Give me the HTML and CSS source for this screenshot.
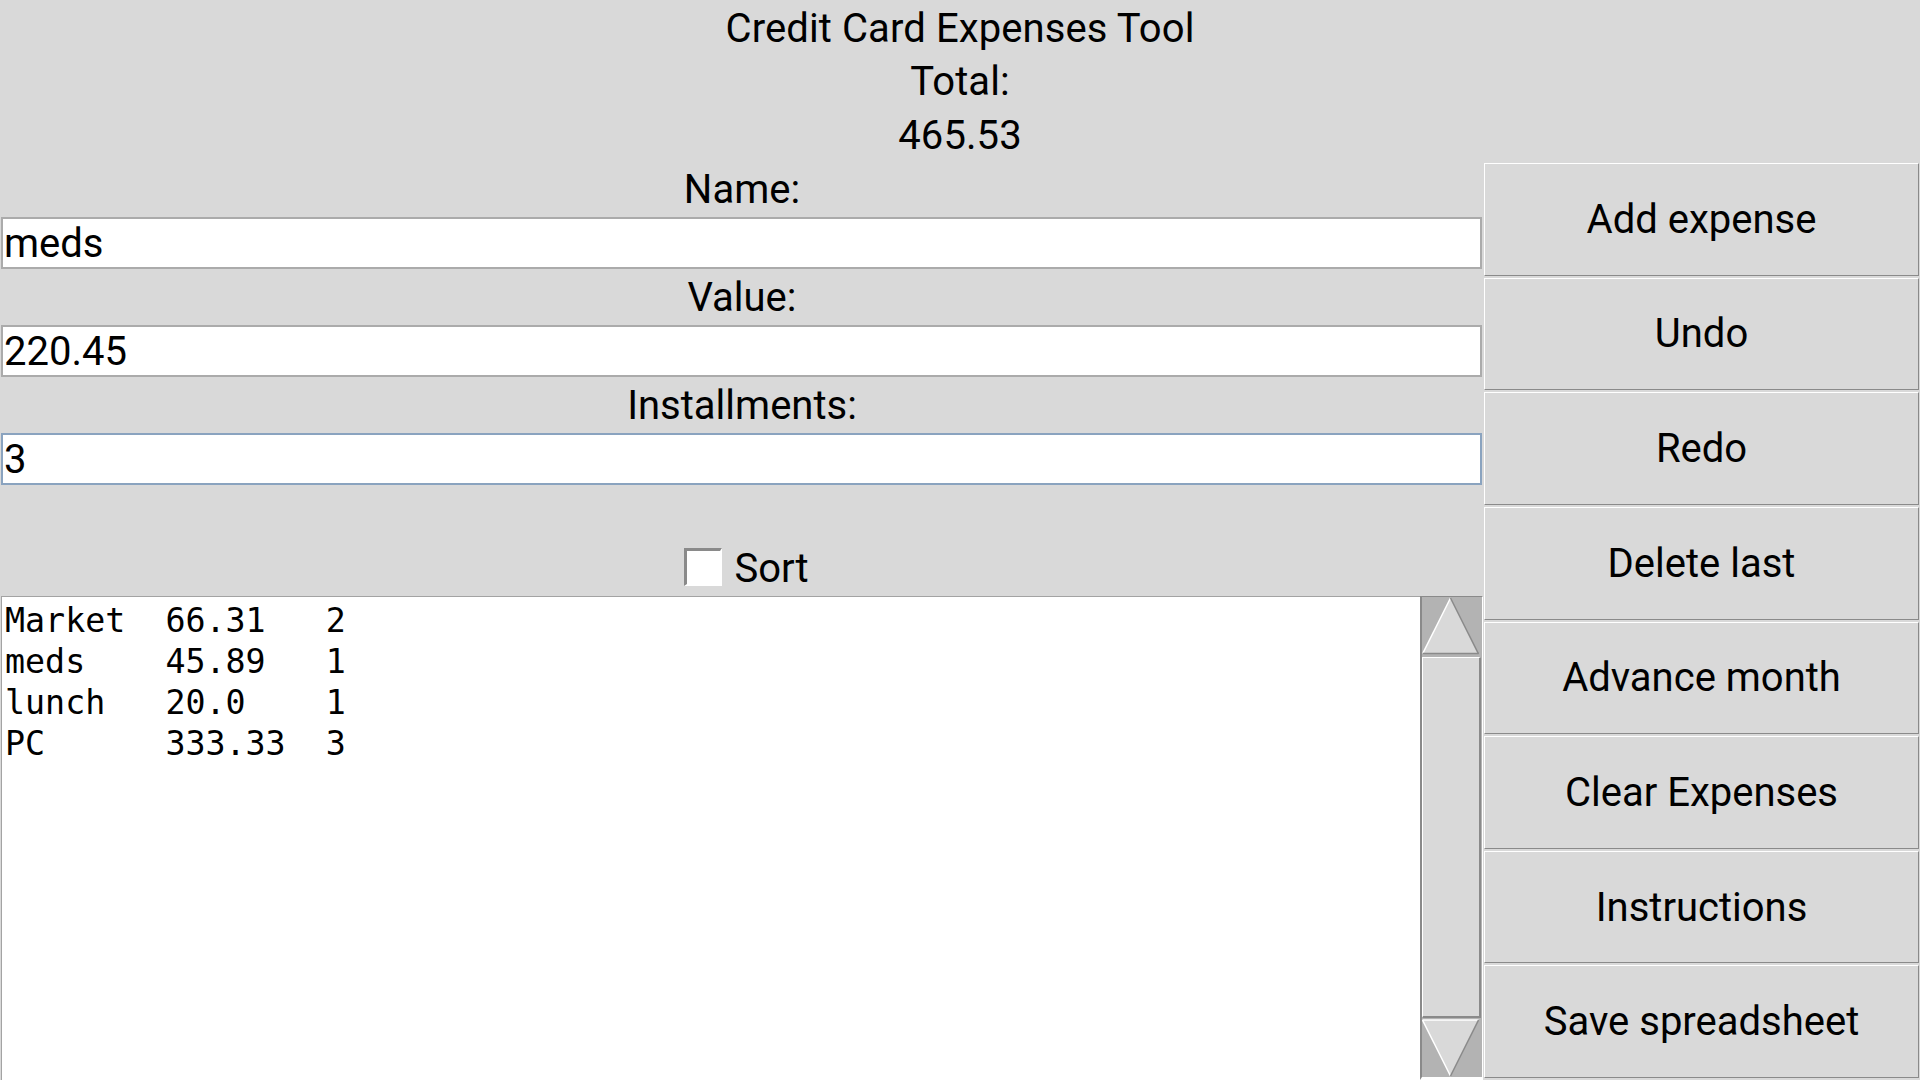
FILE: index.html
```html
<!DOCTYPE html>
<html>
	<head>
		<meta charset="utf-8">
		<title>Credit Card Expenses Tool</title>
		<link rel="stylesheet" href="styles.css">
	</head>
	<body>
		<div id="app">
			<div class="head">
				<div class="line">Credit Card Expenses Tool</div>
				<div class="line">Total:</div>
				<div class="line" id="total">465.53</div>
			</div>
			<div class="main">
				<div class="form">
					<div class="label first">Name:</div>
					<input class="entry" type="text" value="meds">
					<div class="label">Value:</div>
					<input class="entry" type="text" value="220.45">
					<div class="label">Installments:</div>
					<input class="entry focus" type="text" value="3">
					<div class="spacer"></div>
					<div class="sortrow">
						<span class="check"></span>
						<span class="sorttext">Sort</span>
					</div>
					<div class="listarea">
						<pre class="listbox">Market	66.31	2
meds	45.89	1
lunch	20.0	1
PC	333.33	3</pre>
						<div class="scrollbar">
							<svg class="arrow" width="57" height="58" viewBox="0 0 57 58">
								<polygon points="28.5,1 0.5,57 56.5,57" fill="#d9d9d9"/>
								<line x1="28.5" y1="1" x2="0.5" y2="57" stroke="#ffffff" stroke-width="1.5"/>
								<line x1="28.5" y1="1" x2="56.5" y2="57" stroke="#8a8a8a" stroke-width="1.5"/>
								<line x1="0.5" y1="56.5" x2="56.5" y2="56.5" stroke="#8a8a8a" stroke-width="1.5"/>
							</svg>
							<div class="slider"></div>
							<svg class="arrow" width="57" height="58" viewBox="0 0 57 58">
								<polygon points="0.5,1 56.5,1 28.5,57" fill="#d9d9d9"/>
								<line x1="0.5" y1="1" x2="56.5" y2="1" stroke="#ffffff" stroke-width="1.5"/>
								<line x1="0.5" y1="1" x2="28.5" y2="57" stroke="#ffffff" stroke-width="1.5"/>
								<line x1="56.5" y1="1" x2="28.5" y2="57" stroke="#8a8a8a" stroke-width="1.5"/>
							</svg>
						</div>
					</div>
				</div>
				<div class="buttons">
					<button class="btn">Add expense</button>
					<button class="btn">Undo</button>
					<button class="btn">Redo</button>
					<button class="btn">Delete last</button>
					<button class="btn">Advance month</button>
					<button class="btn">Clear Expenses</button>
					<button class="btn">Instructions</button>
					<button class="btn">Save spreadsheet</button>
				</div>
			</div>
		</div>
	</body>
</html>
```

FILE: styles.css
```css
html, body {
	height: 100%;
	width: 100%;
}
body {
	margin: 0;
	overflow: hidden;
	background-color: #d9d9d9;
	font-family: Roboto, "Liberation Sans", sans-serif;
	font-size: 40px;
	color: #000000;
}
#app {
	display: flex;
	flex-direction: column;
	height: 1080px;
}
.head {
	height: 162px;
	overflow: hidden;
}
.line {
	height: 54px;
	line-height: 56px;
	text-align: center;
	letter-spacing: 0.1px;
}
.line:first-child {
	line-height: 57px;
}
.main {
	display: flex;
	height: 918px;
}
.form {
	display: flex;
	flex-direction: column;
	width: 1484px;
}
.label {
	height: 56px;
	line-height: 58px;
	text-align: center;
}
.label.first {
	height: 55px;
	line-height: 56px;
}
.entry {
	box-sizing: border-box;
	height: 52px;
	margin: 0 2px 0 1px;
	padding: 0 0 0 1px;
	border: solid 2px #ababab;
	background-color: #ffffff;
	font-family: Roboto, "Liberation Sans", sans-serif;
	font-size: 40px;
	color: #000000;
	outline: none;
}
.entry.focus {
	border-color: #8aa3bf;
}
.spacer {
	height: 55px;
}
.sortrow {
	display: flex;
	align-items: center;
	justify-content: center;
	height: 56px;
	padding: 1px 0 0 9px;
	box-sizing: border-box;
}
.check {
	box-sizing: border-box;
	width: 38px;
	height: 38px;
	margin-top: -3px;
	margin-right: 12px;
	background-color: #ffffff;
	border-style: solid;
	border-width: 3px 2px 2px 3px;
	border-color: #8a8a8a #ffffff #ffffff #8a8a8a;
}
.sorttext {
	line-height: 56px;
}
.listarea {
	display: flex;
	flex: 1;
	min-height: 0;
}
.listbox {
	flex: 1;
	margin: 0 0 0 1px;
	padding: 3px 0 0 3px;
	background-color: #ffffff;
	border-top: solid 1px #a3a3a3;
	border-left: solid 1px #a3a3a3;
	font-family: "DejaVu Sans Mono", monospace;
	font-size: 33.3px;
	line-height: 41px;
	tab-size: 8;
	overflow: hidden;
}
.scrollbar {
	box-sizing: border-box;
	display: flex;
	flex-direction: column;
	width: 63px;
	margin-right: 1px;
	background-color: #b3b3b3;
	border-style: solid;
	border-width: 1px 1px 3px 2px;
	border-color: #8a8a8a #ffffff #ffffff #8a8a8a;
	padding: 0 1px 0 0;
}
.arrow {
	display: block;
	flex: none;
}
.slider {
	flex: 1;
	margin: 2px 0 1px 0;
	background-color: #d9d9d9;
	border-style: solid;
	border-width: 1px 2px 2px 1px;
	border-color: #ffffff #8a8a8a #8a8a8a #ffffff;
}
.buttons {
	display: flex;
	flex-direction: column;
	flex: 1;
	padding-top: 1px;
}
.btn {
	flex: 1;
	margin: 0 1px 2px 0;
	padding: 0;
	background-color: #d9d9d9;
	border-style: solid;
	border-width: 1px 1px 1px 1px;
	border-color: #ffffff #8a8a8a #8a8a8a #ffffff;
	font-family: Roboto, "Liberation Sans", sans-serif;
	font-size: 40px;
	color: #000000;
}
```
